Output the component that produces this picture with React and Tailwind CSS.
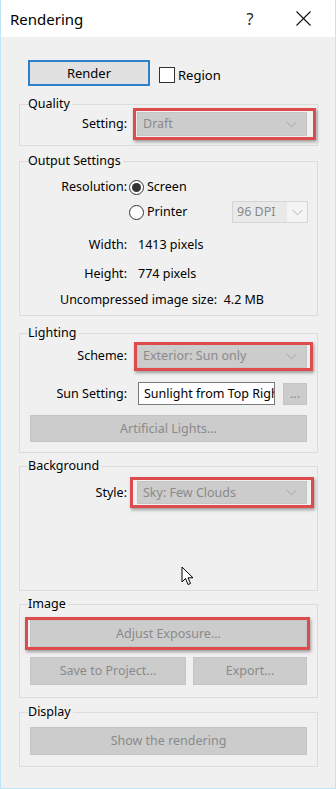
import React from "react";

function Chevron({ color = "#a6a6a6" }) {
  return (
    <svg width="11" height="7" viewBox="0 0 11 7" className="shrink-0">
      <polyline points="0.5,0.8 5.5,5.8 10.5,0.8" fill="none" stroke={color} strokeWidth="1" />
    </svg>
  );
}

function Combo({ text, h = "h-[24px]", children }) {
  return (
    <div className={`relative w-[170px] ${h}`}>
      <div className="flex h-full items-center justify-between border border-[#c4c4c4] bg-[#cccccc] pl-[5px] pr-[9px] text-[#8a8a8a]">
        <span>{text}</span>
        <Chevron />
      </div>
      {children}
    </div>
  );
}

function RedBox({ className }) {
  return (
    <div
      className={`pointer-events-none absolute border-[3px] border-[#de4b4f] shadow-[1px_2px_3px_rgba(0,0,0,0.35)] ${className}`}
    />
  );
}

function DisabledButton({ children, className = "" }) {
  return (
    <div
      className={`flex items-center justify-center border border-[#c4c4c4] bg-[#cccccc] text-[#8a8a8a] ${className}`}
    >
      {children}
    </div>
  );
}

function Group({ title, className = "", children }) {
  return (
    <fieldset className={`border border-[#dcdcdc] ${className}`}>
      <legend className="ml-[8px] pr-[2px] leading-[16px] text-black">{title}</legend>
      {children}
    </fieldset>
  );
}

function Label({ children }) {
  return <div className="w-[107px] shrink-0 text-right">{children}</div>;
}

function Radio({ checked }) {
  return (
    <div className="flex h-[15px] w-[15px] shrink-0 items-center justify-center rounded-full border border-[#333333] bg-white">
      {checked && <div className="h-[9px] w-[9px] rounded-full bg-[#333333]" />}
    </div>
  );
}

export default function App() {
  return (
    <div className="flex h-[789px] w-[336px] flex-col overflow-hidden border-x border-b border-[#bfe6f5] bg-[#f0f0f0] font-['Noto_Sans',sans-serif] text-[12.5px] leading-[18px] text-black">
      {/* Title bar */}
      <div className="flex h-[37px] shrink-0 items-center bg-white">
        <div className="flex-1 pl-[9px] text-[15px] leading-[20px]">Rendering</div>
        <div className="w-[20px] text-center text-[16px] leading-[20px] text-[#222]">?</div>
        <div className="ml-[35px] mr-[24px] flex h-[20px] w-[16px] items-center justify-center">
          <svg width="15" height="15" viewBox="0 0 15 15">
            <line x1="0.5" y1="0.5" x2="14.5" y2="14.5" stroke="#111" strokeWidth="1.1" />
            <line x1="14.5" y1="0.5" x2="0.5" y2="14.5" stroke="#111" strokeWidth="1.1" />
          </svg>
        </div>
      </div>

      {/* Body */}
      <div className="flex flex-col pl-[18px] pr-[17px]">
        {/* Render row */}
        <div className="mt-[23px] flex h-[26px] items-center">
          <div className="ml-[9px] flex h-[26px] w-[122px] items-center justify-center border-2 border-[#2f7fcf] bg-[#e1e1e1] text-[13px]">
            Render
          </div>
          <div className="ml-[9px] mt-[3px] h-[16px] w-[16px] border border-[#333333] bg-white" />
          <div className="ml-[3px] mt-[3px] text-[13px]">Region</div>
        </div>

        {/* Quality */}
        <Group title="Quality" className="mt-[10px] pb-[9px]">
          <div className="flex h-[24px] items-center">
            <Label>Setting:</Label>
            <div className="ml-[10px]">
              <Combo text="Draft">
                <RedBox className="-left-[4px] -right-[9px] -top-[4px] -bottom-[4px]" />
              </Combo>
            </div>
          </div>
        </Group>

        {/* Output Settings */}
        <Group title="Output Settings" className="mt-[7px] pb-[5px]">
          <div className="mt-[8px] flex h-[20px] items-center">
            <Label>Resolution:</Label>
            <div className="ml-[2px]">
              <Radio checked />
            </div>
            <div className="ml-[3px]">Screen</div>
          </div>
          <div className="mt-[4px] flex h-[22px] items-center">
            <div className="w-[107px] shrink-0" />
            <div className="ml-[2px]">
              <Radio />
            </div>
            <div className="ml-[3px]">Printer</div>
            <div className="ml-auto mr-[9px] flex h-[22px] w-[76px] items-center border border-[#d4d4d4] bg-[#f4f4f4]">
              <div className="flex h-full flex-1 items-center bg-[#e9e9e9] pl-[4px] text-[#8a8a8a]">96 DPI</div>
              <div className="flex w-[20px] items-center justify-center">
                <Chevron color="#b0b0b0" />
              </div>
            </div>
          </div>
          <div className="mt-[12px] flex h-[20px] items-center">
            <Label>Width:</Label>
            <div className="ml-[11px]">1413 pixels</div>
          </div>
          <div className="mt-[9px] flex h-[20px] items-center">
            <Label>Height:</Label>
            <div className="ml-[11px]">774 pixels</div>
          </div>
          <div className="mt-[6px] flex h-[20px] items-center pl-[40px]">
            Uncompressed image size:&nbsp;&nbsp;4.2 MB
          </div>
        </Group>

        {/* Lighting */}
        <Group title="Lighting" className="mt-[9px] pb-[10px]">
          <div className="mt-[3px] flex h-[24px] items-center">
            <Label>Scheme:</Label>
            <div className="ml-[10px]">
              <Combo text="Exterior: Sun only">
                <RedBox className="-left-[3px] -right-[6px] -top-[2px] -bottom-[3px]" />
              </Combo>
            </div>
          </div>
          <div className="mt-[14px] flex h-[23px] items-center">
            <Label>Sun Setting:</Label>
            <div className="ml-[11px] flex h-[23px] w-[137px] items-center overflow-hidden whitespace-nowrap border border-[#7a7a7a] bg-white pl-[5px]">
              Sunlight from Top Right
            </div>
            <DisabledButton className="ml-[8px] h-[22px] w-[24px] leading-[14px]">...</DisabledButton>
          </div>
          <DisabledButton className="ml-[10px] mr-[10px] mt-[10px] h-[27px]">Artificial Lights...</DisabledButton>
        </Group>

        {/* Background */}
        <Group title="Background" className="relative mt-[5px] pb-[86px]">
          <div className="mt-[7px] flex h-[23px] items-center">
            <Label>Style:</Label>
            <div className="ml-[10px]">
              <Combo text="Sky: Few Clouds" h="h-[23px]">
                <RedBox className="-left-[7px] -right-[7px] -top-[4px] -bottom-[4px]" />
              </Combo>
            </div>
          </div>
          <svg
            className="pointer-events-none absolute left-[161px] top-[92px]"
            width="13"
            height="20"
            viewBox="0 0 13 20"
          >
            <path
              d="M1 1 L1 16 L4.5 12.5 L7 18.5 L9.5 17.5 L7 11.8 L12 11.8 Z"
              fill="white"
              stroke="black"
              strokeWidth="1"
              strokeLinejoin="round"
            />
          </svg>
        </Group>

        {/* Image */}
        <Group title="Image" className="mt-[5px] pb-[12px]">
          <div className="relative mx-[10px] mt-[8px]">
            <DisabledButton className="h-[27px]">Adjust Exposure...</DisabledButton>
            <RedBox className="-left-[5px] -right-[3px] -top-[3px] -bottom-[3px]" />
          </div>
          <div className="mx-[10px] mt-[10px] flex gap-[7px]">
            <DisabledButton className="h-[28px] w-[156px]">Save to Project...</DisabledButton>
            <DisabledButton className="h-[28px] flex-1">Export...</DisabledButton>
          </div>
        </Group>

        {/* Display */}
        <Group title="Display" className="mt-[6px] pb-[11px]">
          <DisabledButton className="mx-[10px] mt-[7px] h-[28px]">Show the rendering</DisabledButton>
        </Group>
      </div>
    </div>
  );
}
